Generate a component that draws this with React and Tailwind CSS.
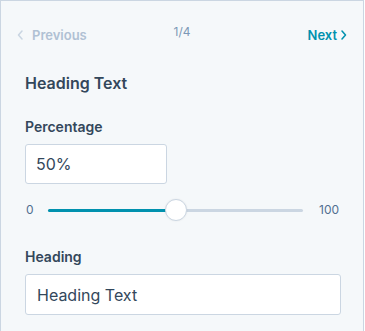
export default function App() {
  const pct = 50;
  return (
    <div className="w-[365px] h-[331px] bg-white" style={{ fontFamily: "Inter, 'Noto Sans', sans-serif" }}>
      <div className="w-[364px] h-[331px] bg-[#f5f8fa] border-t border-l border-r border-[#cbd6e2] flex flex-col">
        <div className="grid grid-cols-3 items-start pl-[16px] pr-[16px] pt-[23px] h-[56px]">
          <div className="flex items-center gap-[9px] text-[#b0c1d4] text-[13px] font-semibold leading-[20px] mt-[1px]">
            <svg width="6" height="10" viewBox="0 0 6 10" fill="none">
              <path d="M5 1L1.5 5L5 9" stroke="#c9d5e2" strokeWidth="1.5" strokeLinecap="round" strokeLinejoin="round" />
            </svg>
            <span>Previous</span>
          </div>
          <div className="text-[#7c98b6] text-[12px] leading-[16px] text-center">1/4</div>
          <div className="flex items-center justify-end gap-[4px] text-[#0091ae] text-[13px] font-semibold leading-[20px] mt-[1px]">
            <span>Next</span>
            <svg width="6" height="10" viewBox="0 0 6 10" fill="none">
              <path d="M1 1L4.5 5L1 9" stroke="#0091ae" strokeWidth="1.5" strokeLinecap="round" strokeLinejoin="round" />
            </svg>
          </div>
        </div>
        <div className="px-[24px] flex flex-col">
          <div className="text-[#33475b] text-[16px] font-semibold leading-[24px] mt-[14px]">Heading Text</div>
          <div className="text-[#33475b] text-[14px] font-semibold leading-[20px] mt-[22px]">Percentage</div>
          <div className="mt-[7px] w-[142px] h-[40px] bg-white border border-[#cbd6e2] rounded-[3px] flex items-center px-[10px] text-[#33475b] text-[16px]">
            {pct}%
          </div>
          <div className="flex items-center mt-[16px] h-[20px] text-[#516f90] text-[12px]">
            <span className="w-[23px] pl-[1px]">0</span>
            <div className="relative flex-1 h-[20px] flex items-center mr-[16px]">
              <div className="w-full h-[3px] bg-[#cbd6e2] rounded-full" />
              <div className="absolute left-0 h-[3px] bg-[#0091ae] rounded-full" style={{ width: `${pct}%` }} />
              <div className="absolute w-[22px] h-[22px] rounded-full bg-white border border-[#cbd6e2] shadow-[0_0_2px_rgba(0,0,0,0.08)]" style={{ left: `calc(${pct}% - 11px)` }} />
            </div>
            <span className="w-[20px] text-right">100</span>
          </div>
          <div className="text-[#33475b] text-[14px] font-semibold leading-[20px] mt-[27px]">Heading</div>
          <div className="mt-[7px] w-[316px] h-[41px] bg-white border border-[#cbd6e2] rounded-[3px] flex items-center px-[11px] text-[#33475b] text-[16px]">
            Heading Text
          </div>
        </div>
      </div>
    </div>
  );
}
